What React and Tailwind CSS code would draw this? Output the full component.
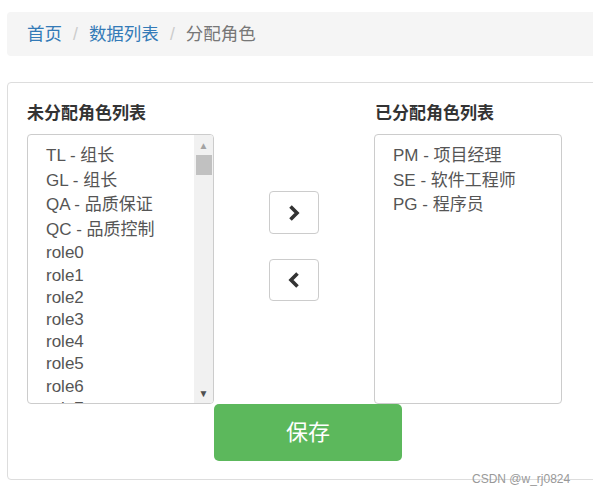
import React from 'react'

const unassigned = [
  { label: 'TL - 组长', cjk: true },
  { label: 'GL - 组长', cjk: true },
  { label: 'QA - 品质保证', cjk: true },
  { label: 'QC - 品质控制', cjk: true },
  { label: 'role0' },
  { label: 'role1' },
  { label: 'role2' },
  { label: 'role3' },
  { label: 'role4' },
  { label: 'role5' },
  { label: 'role6' },
  { label: 'role7' },
]

const assigned = ['PM - 项目经理', 'SE - 软件工程师', 'PG - 程序员']

const Chevron = ({ dir }) => (
  <svg width="14" height="18" viewBox="0 0 14 18">
    {dir === 'right'
      ? <path d="M3.5 2.5 L10 9 L3.5 15.5" fill="none" stroke="#333" strokeWidth="3.6" strokeLinejoin="miter" />
      : <path d="M10.5 2.5 L4 9 L10.5 15.5" fill="none" stroke="#333" strokeWidth="3.6" strokeLinejoin="miter" />}
  </svg>
)

const App = () => {
  return (
    <div className='relative w-[593px] h-[495px] overflow-hidden bg-white font-["Liberation_Sans","Noto_Sans_CJK_SC",sans-serif] text-[17px]'>

      {/* breadcrumb */}
      <div className='ml-[7px] mt-[12px] w-[600px] h-[44px] rounded bg-[#f5f5f5] flex items-center pl-[20px] text-[17.5px]'>
        <span className='text-[#337ab7]'>首页</span>
        <span className='px-[11px] text-[#ccc]'>/</span>
        <span className='text-[#337ab7]'>数据列表</span>
        <span className='px-[11px] text-[#ccc]'>/</span>
        <span className='text-[#777]'>分配角色</span>
      </div>

      {/* panel */}
      <div className='ml-[7px] mt-[26px] w-[620px] h-[398px] border border-[#ddd] rounded pl-[19px] pt-[19px]'>
        <div className='flex'>
          {/* left list */}
          <div className='w-[187px]'>
            <h3 className='h-[24px] leading-[24px] font-bold text-[#333] mb-[8px]'>未分配角色列表</h3>
            <div className='h-[270px] border border-[#ccc] rounded flex overflow-hidden'>
              <div className='flex-1 pl-[18px] pt-[9px] text-[#555] overflow-hidden'>
                {unassigned.map((r) => (
                  <div key={r.label} className={r.cjk ? 'h-[24.6px] leading-[24.6px]' : 'h-[22.2px] leading-[22.2px]'}>
                    {r.label}
                  </div>
                ))}
              </div>
              <div className='w-[19px] bg-[#f1f1f1] flex flex-col items-center'>
                <div className='h-[20px] flex items-center justify-center text-[#a3a3a3] text-[10px]'>▲</div>
                <div className='w-[16px] h-[20px] bg-[#c1c1c1]'></div>
                <div className='flex-1'></div>
                <div className='h-[20px] flex items-center justify-center text-[#505050] text-[10px]'>▼</div>
              </div>
            </div>
          </div>

          {/* move buttons */}
          <div className='w-[160px] flex flex-col items-center pt-[59px]'>
            <div className='mt-[30px] w-[50px] h-[43px] border border-[#ccc] rounded bg-white flex items-center justify-center'>
              <Chevron dir='right' />
            </div>
            <div className='mt-[25px] w-[50px] h-[42px] border border-[#ccc] rounded bg-white flex items-center justify-center'>
              <Chevron dir='left' />
            </div>
          </div>

          {/* right list */}
          <div className='w-[188px]'>
            <h3 className='h-[24px] leading-[24px] font-bold text-[#333] mb-[8px] pl-[1px]'>已分配角色列表</h3>
            <div className='h-[270px] border border-[#ccc] rounded pl-[18px] pt-[9px] text-[#555]'>
              {assigned.map((r) => (
                <div key={r} className='h-[24.6px] leading-[24.6px]'>{r}</div>
              ))}
            </div>
          </div>
        </div>

        <div className='ml-[187px]'>
          <button className='w-[188px] h-[57px] rounded-[5px] bg-[#5cb85c] text-white text-[22px] flex items-center justify-center'>
            保存
          </button>
        </div>
      </div>

      <span className='absolute left-[472px] top-[470px] text-[12px] text-[#999] font-["Liberation_Sans",sans-serif]'>CSDN @w_rj0824</span>
    </div>
  )
}

export default App
